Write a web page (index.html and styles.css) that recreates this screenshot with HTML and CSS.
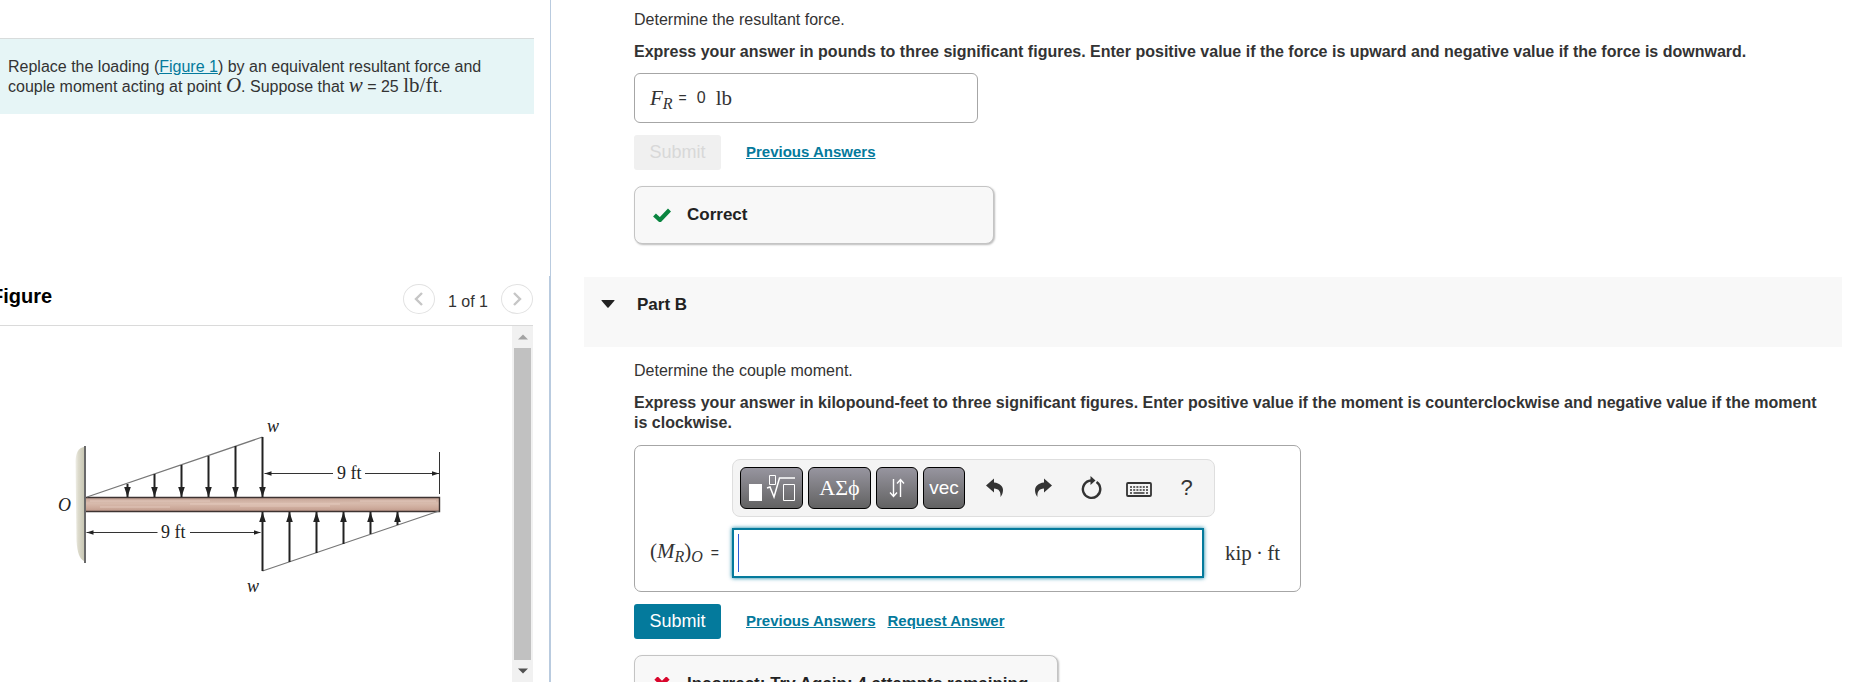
FILE: index.html
```html
<!DOCTYPE html>
<html lang="en">
<head>
<meta charset="utf-8">
<title>Equivalent resultant force and couple moment</title>
<link rel="stylesheet" href="styles.css">
</head>
<body>
<div class="page">
  <aside class="side">
    <section class="prompt">
      <p>Replace the loading (<a href="#figure">Figure 1</a>) by an equivalent resultant force and couple moment acting at point <i class="math">O</i>. Suppose that <i class="math">w</i> = 25 <span class="math">lb/ft</span>.</p>
    </section>
    <section class="figure" id="figure">
      <header class="figure-head">
        <h2>Figure</h2>
        <nav class="pager" aria-label="Figures">
          <button type="button" class="round" aria-label="Previous figure"><svg width="10" height="16" viewBox="0 0 10 16"><path d="M8 2 2 8l6 6" fill="none" stroke="#c6c6c6" stroke-width="2.4"/></svg></button>
          <span>1 of 1</span>
          <button type="button" class="round" aria-label="Next figure"><svg width="10" height="16" viewBox="0 0 10 16"><path d="M2 2l6 6-6 6" fill="none" stroke="#c6c6c6" stroke-width="2.4"/></svg></button>
        </nav>
      </header>
      <div class="figure-body">
        <div class="canvas">
          <svg class="diagram" width="512" height="356" viewBox="0 326 512 356" role="img" aria-label="Beam with triangular loads">
            <defs>
              <linearGradient id="wall" x1="0" x2="1" y1="0" y2="0"><stop offset="0" stop-color="#f0efe8"/><stop offset=".35" stop-color="#dcdacb"/><stop offset="1" stop-color="#c8c7b4"/></linearGradient>
              <linearGradient id="wood" x1="0" x2="0" y1="0" y2="1"><stop offset="0" stop-color="#c4a294"/><stop offset=".4" stop-color="#d8bbad"/><stop offset=".7" stop-color="#cfad9e"/><stop offset="1" stop-color="#bf998a"/></linearGradient>
              <marker id="head" markerUnits="userSpaceOnUse" markerWidth="12" markerHeight="8" refX="10" refY="3.5" orient="auto"><path d="M0 .2 10 3.5 0 6.8z" fill="#222"/></marker>
              <marker id="dim" markerUnits="userSpaceOnUse" markerWidth="8" markerHeight="6" refX="7" refY="2.5" orient="auto"><path d="M0 .2 7 2.5 0 4.8z" fill="#222"/></marker>
            </defs>
            <path d="M84 447q-8 1-8.500 14l1 80q1 17 7.500 20z" fill="url(#wall)"/>
            <path d="M85 446v117" stroke="#444" stroke-width="1.6"/>
            <rect x="86" y="497.500" width="353.500" height="14" fill="url(#wood)"/>
            <path d="M90 501h120M240 506h90M360 501h76M100 507h70M190 504h150" stroke="#ead2c6" stroke-width="1" opacity=".7"/>
            <path d="M86 497.500h353.500v14H86" fill="none" stroke="#3d3331" stroke-width="1.400"/>
            <path d="M87 497 262.500 437M262.500 571 439 511" stroke="#777" stroke-width="1.300"/>
            <g stroke="#222" stroke-width="2">
              <path d="M127.500 484v13" marker-end="url(#head)"/><path d="M154.500 474v23" marker-end="url(#head)"/><path d="M181.500 465v32" marker-end="url(#head)"/><path d="M208.500 456v41" marker-end="url(#head)"/><path d="M235.500 446v51" marker-end="url(#head)"/><path d="M262.500 437v60" marker-end="url(#head)"/>
              <path d="M262.500 571v-59" marker-end="url(#head)"/><path d="M289.500 562v-50" marker-end="url(#head)"/><path d="M316.500 553v-41" marker-end="url(#head)"/><path d="M343.500 544v-32" marker-end="url(#head)"/><path d="M370.500 534v-22" marker-end="url(#head)"/><path d="M397.500 525v-13" marker-end="url(#head)"/>
            </g>
            <g stroke="#333" stroke-width="1">
              <path d="M157.500 532.500H86.500" marker-end="url(#dim)"/><path d="M190 532.500h70.500" marker-end="url(#dim)"/>
              <path d="M333 473.500h-68.500" marker-end="url(#dim)"/><path d="M365 473.500h74" marker-end="url(#dim)"/>
              <path d="M439.500 452v42"/>
            </g>
            <g class="labels">
              <text x="58" y="511" font-style="italic">O</text>
              <text x="267" y="432" font-style="italic">w</text>
              <text x="247" y="592" font-style="italic">w</text>
              <text x="161" y="538">9 ft</text>
              <text x="337" y="479">9 ft</text>
            </g>
          </svg>
        </div>
        <div class="scrollbar" aria-hidden="true">
          <svg width="10" height="6" viewBox="0 0 10 6"><path d="M0 5.500 5 .5l5 5z" fill="#a3a3a3"/></svg>
          <div class="thumb"></div>
          <svg width="10" height="6" viewBox="0 0 10 6"><path d="M0 .5l5 5 5-5z" fill="#505050"/></svg>
        </div>
      </div>
    </section>
  </aside>

  <main class="main">
    <section class="part">
      <p>Determine the resultant force.</p>
      <p class="hint">Express your answer in pounds to three significant figures. Enter positive value if the force is upward and negative value if the force is downward.</p>
      <div class="given"><span class="math"><i>F</i><sub><i>R</i></sub></span><span class="eq">=</span><span class="zero">0</span><span class="math">lb</span></div>
      <div class="actions">
        <button type="button" class="submit" disabled>Submit</button>
        <a href="#prev-a">Previous Answers</a>
      </div>
      <div class="verdict">
        <svg width="18" height="14" viewBox="0 0 18 14"><path d="M1.500 7 7 12 16.500 2" fill="none" stroke="#0a8540" stroke-width="4.200"/></svg>
        <strong>Correct</strong>
      </div>
    </section>

    <header class="part-head">
      <svg width="14" height="8" viewBox="0 0 14 8"><path d="M1 0h12q1 0 .4.800L7.600 7.400q-.6.6-1.200 0L.6.800Q0 0 1 0z" fill="#222"/></svg>
      <h2>Part B</h2>
    </header>

    <section class="part">
      <p>Determine the couple moment.</p>
      <p class="hint">Express your answer in kilopound-feet to three significant figures. Enter positive value if the moment is counterclockwise and negative value if the moment is clockwise.</p>
      <div class="entry">
        <div class="toolbar">
          <button type="button" class="key wide" aria-label="Templates"><svg width="48" height="28" viewBox="0 0 48 28"><path d="M1 10h13v17H1z" fill="#fff"/><g fill="none" stroke="#fff"><path d="M21.500 1.500h6v9h-6z"/><path d="M35.500 10.500h11v16h-11z"/><path d="M19 14l3-1 4 10L31.500 4H47" stroke-width="1.500"/></g></svg></button>
          <button type="button" class="key wide greek">ΑΣϕ</button>
          <button type="button" class="key" aria-label="Swap"><svg width="16" height="20" viewBox="0 0 16 20"><path d="M4.500 1v17M1 14.500l3.500 4 3.500-4M11.500 19V2M8 5.500l3.500-4 3.500 4" fill="none" stroke="#fff" stroke-width="1.400"/></svg></button>
          <button type="button" class="key">vec</button>
          <div class="tools">
            <button type="button" class="tool" aria-label="Undo"><svg width="18" height="20" viewBox="0 0 18 20"><path d="M0 7.500 8 .5v4C14 5 17 8.500 17 12c0 3-1 5-2.500 7C15 14 13 10.500 8 10.500v4z" fill="#333"/></svg></button>
            <button type="button" class="tool" aria-label="Redo"><svg width="18" height="20" viewBox="0 0 18 20"><path d="M18 7.500 10 .5v4C4 5 1 8.500 1 12c0 3 1 5 2.500 7C3 14 5 10.500 10 10.500v4z" fill="#333"/></svg></button>
            <button type="button" class="tool" aria-label="Reset"><svg width="22" height="24" viewBox="0 0 22 24"><path d="M16.500 6A8.700 8.700 0 1 1 11 4.500" fill="none" stroke="#333" stroke-width="2.400"/><path d="M10.500 0l5 4.500-5 4.500z" fill="#333"/></svg></button>
            <button type="button" class="tool" aria-label="Keyboard"><svg class="kbd" width="26" height="16" viewBox="0 0 26 16"><rect x="1" y="1" width="24" height="13" rx="1" fill="none" stroke="#333" stroke-width="1.800"/><path d="M4 5h18M4 8h18" stroke="#333" stroke-width="1.600" stroke-dasharray="2 1.200"/><path d="M4 11h2M7.500 11h11M20 11h2" stroke="#333" stroke-width="1.600"/></svg></button>
            <button type="button" class="tool" aria-label="Help">?</button>
          </div>
        </div>
        <label class="math" for="moment">(<i>M</i><sub><i>R</i></sub>)<sub><i>O</i></sub><span class="eq">=</span></label>
        <div class="field"><input id="moment" type="text"><span class="caret"></span></div>
        <span class="math unit">kip&thinsp;·&thinsp;ft</span>
      </div>
      <div class="actions">
        <button type="button" class="submit">Submit</button>
        <a href="#prev-b">Previous Answers</a>
        <a href="#request">Request Answer</a>
      </div>
      <div class="verdict wrong">
        <svg width="18" height="14" viewBox="0 0 18 14"><path d="M3 1l12 12M15 1 3 13" stroke="#d9062c" stroke-width="4.600"/></svg>
        <strong>Incorrect; Try Again; 4 attempts remaining</strong>
      </div>
    </section>
  </main>
</div>
</body>
</html>
```
FILE: styles.css
```css
* { box-sizing: border-box; }
body { margin: 0; font: 16px/20px "Liberation Sans", Arial, sans-serif; color: #333; background: #fff; }
p, h2 { margin: 0; }
button { font-family: inherit; padding: 0; margin: 0; }
a { color: #047a9c; text-decoration: underline; }
svg { display: block; flex: none; }
.page { display: flex; height: 100vh; overflow: hidden; }

.math { font-family: "Liberation Serif", "Times New Roman", serif; font-size: 21px; line-height: 16px; }
.math sub { font-size: 16px; line-height: 0; vertical-align: -4px; }

.side { flex: none; width: 551px; display: flex; flex-direction: column; padding-top: 38px; border-right: 1px solid #b9cbdf; }
.prompt { margin-right: 16px; padding: 18px 8px 17px; border-top: 1px solid #d8dcdc; background: #e6f5f6; }
.figure { flex: 1; display: flex; flex-direction: column; margin-top: 162px; padding-right: 16px; border-right: 1px solid #b9cbdf; }
.figure-head { display: flex; justify-content: space-between; align-items: flex-start; height: 50px; padding-top: 8px; border-bottom: 1px solid #dadada; }
.figure-head h2 { margin-left: -9px; font-size: 20px; line-height: 24px; color: #000; }
.pager { display: flex; align-items: center; gap: 13px; }
.pager span { padding-top: 6px; }
.round { display: flex; align-items: center; justify-content: center; width: 32px; height: 30px; border: 1px solid #e2e2e2; border-radius: 50%; background: #fff; }
.figure-body { flex: 1; display: flex; min-height: 0; }
.canvas { flex: 1; min-width: 0; overflow: hidden; }
.labels { font: 18px "Liberation Serif", serif; fill: #222; }
.scrollbar { display: flex; flex-direction: column; align-items: center; gap: 8px; width: 21px; padding: 8px 0; background: #f1f1f1; }
.thumb { flex: 1; width: 17px; background: #c1c1c1; }

.main { flex: 1; min-width: 0; padding: 10px 20px 0 33px; }
.part { padding-left: 50px; }
.hint { margin-top: 12px; padding-right: 10px; font-weight: bold; }
.given { display: flex; align-items: center; width: 344px; height: 50px; margin-top: 11px; padding-left: 15px; border: 1px solid #a6a6a6; border-radius: 6px; }
.eq { margin-left: 8px; font: 14px/20px "Liberation Sans", Arial, sans-serif; }
.given .eq { margin: 0 10px 0 6px; }
.zero { margin-right: 10px; }
.actions { display: flex; align-items: center; gap: 12px; margin-top: 12px; font-size: 15px; font-weight: bold; }
.actions a { padding-bottom: 2px; }
.submit { width: 87px; height: 35px; margin-right: 13px; border: 0; border-radius: 3px; background: #047a9c; color: #fff; font-size: 18px; }
.submit:disabled { background: #f0f0f0; color: #d8d8d8; }
.verdict { display: flex; align-items: center; gap: 16px; width: 360px; height: 58px; margin-top: 16px; padding-left: 18px; border: 1px solid #c4c4c4; border-radius: 8px; background: #f8f8f8; box-shadow: 1px 1px 2px #bbb; font-size: 17px; color: #222; }
.wrong { width: 424px; }

.part-head { display: flex; align-items: flex-start; gap: 22px; height: 70px; margin: 33px 0 14px; padding: 18px 17px; background: #f8f8f8; color: #222; }
.part-head svg { margin-top: 5px; }
.part-head h2 { font-size: 17px; line-height: 20px; }

.entry { display: grid; grid-template-columns: 82px 472px 1fr; align-items: center; row-gap: 10px; width: 667px; height: 147px; margin-top: 12px; padding: 13px 15px 13px; border: 1px solid #a6a6a6; border-radius: 7px; }
.toolbar { grid-column: 2 / 4; justify-self: start; display: flex; align-items: center; gap: 5px; width: 483px; height: 58px; padding-left: 7px; border: 1px solid #dedede; border-radius: 8px; background: #f4f4f4; }
.key { display: flex; align-items: center; justify-content: center; width: 42px; height: 42px; border: 1px solid #000; border-radius: 6px; background: linear-gradient(#97959f, #626262); color: #fff; font-size: 19px; }
.wide { width: 63px; }
.greek { font: 22px "Liberation Serif", serif; }
.tools { display: flex; gap: 5px; margin-left: 3px; }
.tool { display: flex; align-items: center; justify-content: center; width: 43px; height: 42px; border: 0; background: none; font-size: 22px; color: #333; }
.kbd { margin-top: 4px; }
.field { position: relative; }
.field input { display: block; width: 100%; height: 50px; border: 2px solid #047a9c; padding: 0 6px; background: #fff; box-shadow: 0 0 4px #047a9c; outline: 0; font-size: 18px; }
.caret { position: absolute; left: 6px; top: 6px; width: 1px; height: 38px; background: #2a5bd7; }
.unit { padding-left: 21px; }
```
